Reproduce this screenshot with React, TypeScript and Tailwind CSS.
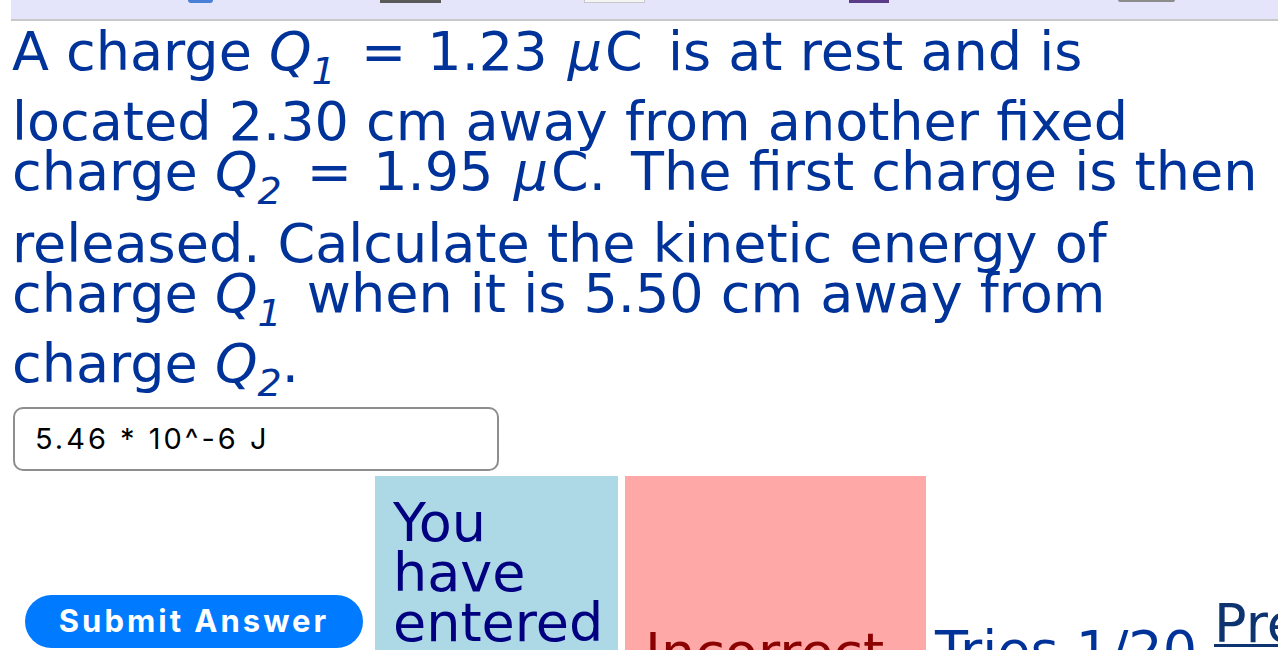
import React from 'react';

const sans = { fontFamily: '"DejaVu Sans", Verdana, sans-serif' };
const ui = { fontFamily: 'Inter, "Liberation Sans", sans-serif' };

function Charge({ n }: { n: string }) {
  return (
    <span className="mr-[8px]">
      <span className="italic">Q</span>
      <span className="relative top-[14px] text-[38px] italic">{n}</span>
    </span>
  );
}

function Equals() {
  return <span className="mr-[4px]">=</span>;
}

// value with a micro-coulomb unit, e.g. 1.23 μC
function MicroCoulomb({ value }: { value: string }) {
  return (
    <>
      {value}{' '}
      <span className="ml-[3px] mr-[3px] italic">μ</span>
      <span>C</span>
    </>
  );
}

function TopBar() {
  return (
    <div className="ml-[11px] flex h-[21px] items-start border-b-2 border-[#c8c8c8] bg-[#e4e4fa]">
      <div className="ml-[177px] h-[3px] w-[25px] shrink-0 rounded-b-full bg-[#4a7fd8]" />
      <div className="ml-[167px] h-[3px] w-[61px] shrink-0 bg-[#5a5a5a]" />
      <div className="ml-[143px] h-[3px] w-[61px] shrink-0 border-x border-b border-[#c9c9c9] bg-[#f4f4f4]" />
      <div className="ml-[204px] h-[3px] w-[40px] shrink-0 bg-[#5b3c88]" />
      <div className="ml-[229px] h-[2px] w-[57px] shrink-0 rounded-b-full bg-[#8c8c8c]" />
    </div>
  );
}

export default function App() {
  return (
    <div className="h-[650px] w-full overflow-hidden bg-white">
      <TopBar />

      {/* Question */}
      <div
        className="mt-[6px] whitespace-nowrap pl-[12px] text-[54px] leading-[50px] text-[#003399]"
        style={sans}
      >
        <div className="h-[70px]">
          A charge <Charge n="1" /> <Equals /> <MicroCoulomb value="1.23" />
          <span className="ml-[8px]"> is at rest and is</span>
        </div>
        <div className="h-[50px]">located 2.30 cm away from another fixed</div>
        <div className="h-[72px]">
          charge <Charge n="2" /> <Equals /> <MicroCoulomb value="1.95" />.
          <span className="ml-[8px]"> The first charge is then</span>
        </div>
        <div className="h-[50px]">released. Calculate the kinetic energy of</div>
        <div className="h-[70px]">
          charge <Charge n="1" /> when it is 5.50 cm away from
        </div>
        <div className="h-[68px]">
          charge <span className="italic">Q</span>
          <span className="relative top-[14px] text-[38px] italic">2</span>.
        </div>
      </div>

      {/* Answer field */}
      <div
        className="ml-[13px] flex h-[64px] w-[486px] items-center rounded-[10px] border-2 border-[#8e8e8e] pl-[20px] text-[29px] tracking-[3px] text-black"
        style={ui}
      >
        5.46 * 10^-6 J
      </div>

      {/* Submit row and feedback */}
      <div className="mt-[5px] flex items-start whitespace-nowrap" style={sans}>
        <button
          className="ml-[25px] mt-[119px] flex h-[53px] w-[338px] shrink-0 items-center justify-center rounded-full bg-[#007aff] text-[31px] font-bold tracking-[3px] text-white"
          style={ui}
        >
          Submit Answer
        </button>
        <div className="ml-[12px] h-[260px] w-[243px] shrink-0 whitespace-normal bg-[#add8e6] pl-[18px] pr-[4px] pt-[22px] text-[54px] leading-[50px] text-[#000080]">
          You have entered that answer before
        </div>
        <div className="ml-[7px] h-[260px] w-[301px] shrink-0 bg-[#ffa8a8] pl-[20px] pt-[152px] text-[54px] leading-[50px] text-[#8b0000]">
          Incorrect
        </div>
        <div className="ml-[9px] mt-[150px] shrink-0 text-[54px] leading-[50px] text-[#003399]">
          Tries 1/20
        </div>
        <a
          href="#"
          className="ml-[17px] mt-[128px] shrink-0 border-b-[3px] border-[#0d3470] text-[54px] leading-[40px] text-[#0d3470]"
        >
          Previous Tries
        </a>
      </div>
    </div>
  );
}
